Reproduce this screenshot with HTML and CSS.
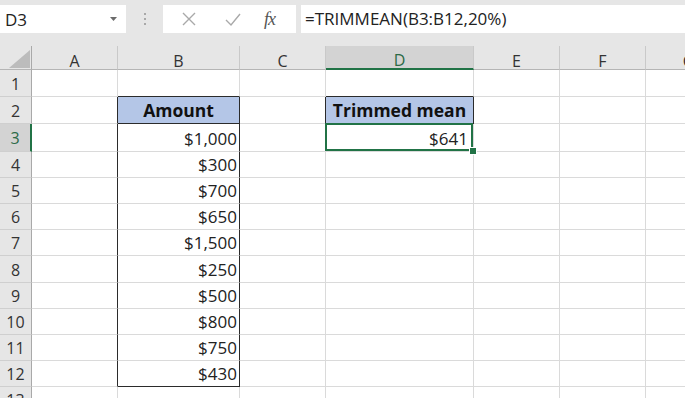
FILE: index.html
```html
<!DOCTYPE html>
<html>
<head>
<meta charset="utf-8">
<link rel="stylesheet" href="styles.css">
</head>
<body>
<div class="toolbar">
  <div class="namebox"><span>D3</span>
    <svg class="dd" width="7" height="4" viewBox="0 0 7 4"><path d="M0 0H7L3.5 4Z" fill="#6b6b6b"/></svg>
  </div>
  <div class="grip"><i></i><i></i><i></i></div>
  <div class="fxbox">
    <svg class="ico" width="16" height="16" viewBox="0 0 16 16"><path d="M2 2L14 14M14 2L2 14" stroke="#a9a9a9" stroke-width="1.4" fill="none"/></svg>
    <svg class="ico" width="18" height="16" viewBox="0 0 18 16"><path d="M2 9L7 14L16 3" stroke="#a9a9a9" stroke-width="1.4" fill="none"/></svg>
    <span class="fx">fx</span>
  </div>
  <div class="formula">=TRIMMEAN(B3:B12,20%)</div>
</div>
<div class="sheet">
  <div class="h corner"><svg width="22" height="19" viewBox="0 0 22 19"><path d="M21 0V18H0Z" fill="#bcbcbc"/></svg></div>
  <div class="h">A</div><div class="h">B</div><div class="h">C</div><div class="h sel">D</div><div class="h">E</div><div class="h">F</div><div class="h">G</div>

  <div class="r">1</div><div class="c"></div><div class="c bb"></div><div class="c"></div><div class="c bb"></div><div class="c"></div><div class="c"></div><div class="c"></div>

  <div class="r">2</div><div class="c br"></div><div class="c head br bb">Amount</div><div class="c br"></div><div class="c head br bb">Trimmed mean</div><div class="c"></div><div class="c"></div><div class="c"></div>

  <div class="r rsel">3</div><div class="c br"></div><div class="c num br">$1,000</div><div class="c"></div><div class="c num active">$641<span class="handle"></span></div><div class="c"></div><div class="c"></div><div class="c"></div>

  <div class="r">4</div><div class="c br"></div><div class="c num br">$300</div><div class="c"></div><div class="c"></div><div class="c"></div><div class="c"></div><div class="c"></div>

  <div class="r">5</div><div class="c br"></div><div class="c num br">$700</div><div class="c"></div><div class="c"></div><div class="c"></div><div class="c"></div><div class="c"></div>

  <div class="r">6</div><div class="c br"></div><div class="c num br">$650</div><div class="c"></div><div class="c"></div><div class="c"></div><div class="c"></div><div class="c"></div>

  <div class="r">7</div><div class="c br"></div><div class="c num br">$1,500</div><div class="c"></div><div class="c"></div><div class="c"></div><div class="c"></div><div class="c"></div>

  <div class="r">8</div><div class="c br"></div><div class="c num br">$250</div><div class="c"></div><div class="c"></div><div class="c"></div><div class="c"></div><div class="c"></div>

  <div class="r">9</div><div class="c br"></div><div class="c num br">$500</div><div class="c"></div><div class="c"></div><div class="c"></div><div class="c"></div><div class="c"></div>

  <div class="r">10</div><div class="c br"></div><div class="c num br">$800</div><div class="c"></div><div class="c"></div><div class="c"></div><div class="c"></div><div class="c"></div>

  <div class="r">11</div><div class="c br"></div><div class="c num br">$750</div><div class="c"></div><div class="c"></div><div class="c"></div><div class="c"></div><div class="c"></div>

  <div class="r">12</div><div class="c br"></div><div class="c num br bb">$430</div><div class="c"></div><div class="c"></div><div class="c"></div><div class="c"></div><div class="c"></div>

  <div class="r">13</div><div class="c"></div><div class="c"></div><div class="c"></div><div class="c"></div><div class="c"></div><div class="c"></div><div class="c"></div>
</div>
</body>
</html>
```
FILE: styles.css
```css
* { box-sizing: border-box; }
html, body { margin: 0; padding: 0; }
body {
  width: 685px;
  height: 398px;
  overflow: hidden;
  background: #e6e6e6;
  font-family: "Open Sans", "Noto Sans", sans-serif;
  color: #222;
}
.toolbar {
  display: flex;
  align-items: flex-start;
  height: 46px;
  padding-top: 5px;
}
.namebox {
  width: 126px;
  height: 28px;
  background: #fff;
  display: flex;
  align-items: center;
  justify-content: space-between;
  padding: 0 9px 0 5px;
  font-size: 17px;
  color: #222;
}
.grip {
  width: 37px;
  height: 28px;
  display: flex;
  flex-direction: column;
  align-items: center;
  justify-content: center;
  gap: 3px;
}
.grip i {
  display: block;
  width: 2px;
  height: 2px;
  background: #a8a8a8;
}
.fxbox {
  width: 133px;
  height: 28px;
  background: #fff;
  display: flex;
  align-items: center;
  padding-left: 18px;
  gap: 0;
}
.fxbox .ico:first-child { margin-right: 27px; }
.fxbox .ico:nth-child(2) { margin-right: 22px; }
.fx {
  font-family: "Liberation Serif", "DejaVu Serif", serif;
  font-style: italic;
  font-size: 18px;
  color: #555;
  letter-spacing: -1px;
}
.formula {
  flex: 1;
  margin-left: 5px;
  height: 28px;
  background: #fff;
  padding-left: 4px;
  font-size: 17px;
  line-height: 28px;
  color: #222;
}
.sheet {
  display: grid;
  grid-template-columns: 32px 86px 122px 86px 148px 86px 86px 86px;
  grid-template-rows: 24px 27px 27px 28px 26px 26px 26px 26px 27px 26px 26px 26px 26px 26px;
  background: #fff;
}
.h {
  background: #e6e6e6;
  border-right: 1px solid #c9c9c9;
  border-bottom: 1px solid #b5b5b5;
  display: flex;
  align-items: flex-end;
  justify-content: center;
  font-size: 16px;
  line-height: 16px;
  padding-bottom: 0;
  color: #333;
}
.h.corner {
  align-items: flex-start;
  justify-content: flex-start;
  padding: 4px 0 0 9px;
  border-right-color: #a9a9a9;
}
.h.sel {
  background: #d3d3d3;
  border-bottom: 2px solid #217346;
  color: #2c6a47;
  padding-bottom: 0;
  line-height: 15px;
}
.r {
  background: #e6e6e6;
  border-right: 1px solid #a9a9a9;
  border-bottom: 1px solid #cfcfcf;
  display: flex;
  align-items: center;
  justify-content: center;
  font-size: 16px;
  padding-top: 1px;
  color: #333;
}
.r.rsel {
  background: #d3d3d3;
  border-right: 2px solid #217346;
  color: #2c6a47;
}
.c {
  border-right: 1px solid #dadada;
  border-bottom: 1px solid #dadada;
  display: flex;
  align-items: flex-end;
  font-size: 17px;
  line-height: 22px;
  padding-bottom: 1px;
  white-space: nowrap;
}
.c.br { border-right-color: #2b2b2b; }
.c.bb { border-bottom-color: #2b2b2b; }
.c.head {
  background: #b4c6e7;
  justify-content: center;
  font-weight: 700;
  font-size: 17.5px;
  padding-bottom: 2px;
  color: #111;
}
.c.num {
  justify-content: flex-end;
  padding-right: 2px;
}
.c.active {
  position: relative;
  padding-right: 5px;
}
.c.active::after {
  content: "";
  position: absolute;
  top: -1px;
  left: -1px;
  right: 0;
  bottom: 0;
  border: 2px solid #217346;
  pointer-events: none;
}
.handle {
  position: absolute;
  right: -3px;
  bottom: -3px;
  width: 6px;
  height: 6px;
  background: #217346;
  outline: 1px solid #fff;
  z-index: 2;
}
```
